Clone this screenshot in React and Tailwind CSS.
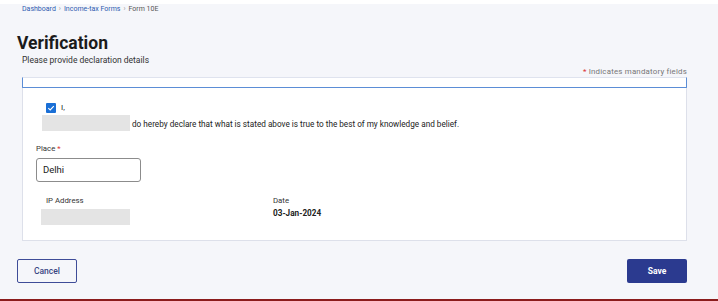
export default function App() {
  return (
    <div className="w-[718px] h-[301px] bg-[#f5f6fa] flex flex-col overflow-hidden" style={{ fontFamily: "Roboto, 'Liberation Sans', sans-serif" }}>
      <div className="h-[4px] bg-white shrink-0" />
      <div className="pl-[22px] h-[10px] flex items-center gap-[3px] text-[7px] leading-[10px]">
        <span className="text-[#2d5bb0]">Dashboard</span>
        <span className="text-[#999]">›</span>
        <span className="text-[#2d5bb0]">Income-tax Forms</span>
        <span className="text-[#999]">›</span>
        <span className="text-[#555]">Form 10E</span>
      </div>
      <h1 className="mt-[19px] pl-[17px] text-[17.5px] leading-[20px] font-bold text-[#1b1b1b]">Verification</h1>
      <p className="mt-[2px] pl-[22px] text-[8.5px] leading-[10px] text-[#333]">Please provide declaration details</p>
      <div className="mt-[2px] pr-[31px] flex justify-end text-[7.9px] leading-[10px] text-[#777] tracking-[0.2px]">
        <span><span className="text-[#d33]">*</span> Indicates mandatory fields</span>
      </div>
      <div className="ml-[22px] mr-[31px] flex flex-col">
        <div className="h-[11px] bg-white border-t border-t-[#dfe3ee] border-x border-b border-x-[#5b8dd6] border-b-[#5b8dd6] rounded-b-[1px]" />
        <div className="h-[153px] bg-white border-x border-b border-[#dde0ea] flex flex-col">
          <div className="mt-[14px] ml-[23px] flex items-center gap-[5px] h-[11px]">
            <span className="w-[10px] h-[10px] rounded-[1px] bg-[#1a6fd6] flex items-center justify-center">
              <svg width="8" height="8" viewBox="0 0 8 8"><path d="M1.3 4.2 L3.2 5.9 L6.8 2.2" fill="none" stroke="white" strokeWidth="1.1" /></svg>
            </span>
            <span className="text-[8px] text-[#222]">I,</span>
          </div>
          <div className="mt-[2px] ml-[19px] flex items-center gap-[2px]">
            <div className="w-[88px] h-[16px] bg-[#e4e4e4]" />
            <span className="text-[8.2px] text-[#222] mt-[2px]">do hereby declare that what is stated above is true to the best of my knowledge and belief.</span>
          </div>
          <div className="mt-[13px] ml-[13px] text-[7.8px] leading-[10px] text-[#333]">Place <span className="text-[#d33]">*</span></div>
          <div className="mt-[4px] ml-[13px] w-[105px] h-[24px] border border-[#8c8c8c] rounded-[3px] flex items-center pl-[6px] text-[9.5px] text-[#222]">Delhi</div>
          <div className="mt-[14px] flex">
            <div className="ml-[18px] w-[232px] flex flex-col">
              <span className="ml-[5px] text-[7.8px] leading-[10px] text-[#333]">IP Address</span>
              <div className="mt-[3px] w-[89px] h-[16px] bg-[#e4e4e4]" />
            </div>
            <div className="flex flex-col">
              <span className="text-[7.8px] leading-[10px] text-[#333]">Date</span>
              <span className="mt-[2px] text-[8.2px] leading-[10px] font-bold text-[#222]">03-Jan-2024</span>
            </div>
          </div>
        </div>
      </div>
      <div className="mt-[18px] pl-[17px] pr-[31px] flex justify-between">
        <button className="w-[60px] h-[24px] border border-[#3e4c98] rounded-[2px] bg-transparent text-[8.5px] font-medium text-[#3a4682]">Cancel</button>
        <button className="w-[60px] h-[24px] rounded-[2px] bg-[#2b3a8f] text-[8.5px] font-bold text-white">Save</button>
      </div>
      <div className="mt-auto h-[2px] bg-[#8b1c1c]" />
    </div>
  );
}
